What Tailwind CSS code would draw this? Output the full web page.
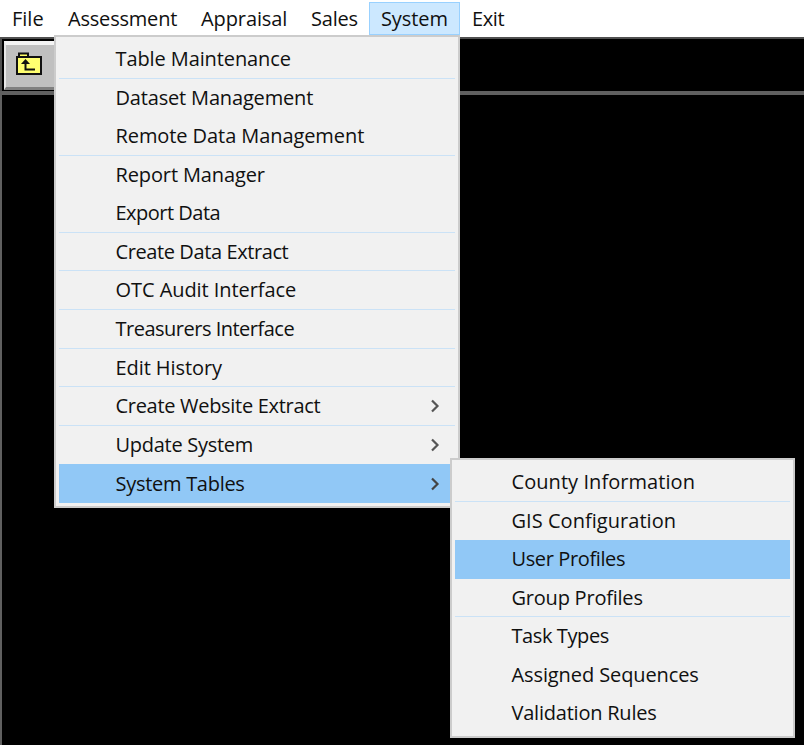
<!DOCTYPE html>
<html lang="en">
<head>
  <meta charset="UTF-8" />
  <meta name="viewport" content="width=device-width, initial-scale=1.0"/>
  <title>System Menu</title>
  <script src="https://cdn.jsdelivr.net/npm/@tailwindcss/browser@4"></script>
</head>
<body class="bg-black w-[804px] h-[745px] overflow-hidden relative font-['Open_Sans','Noto_Sans',sans-serif] text-[20px] text-[#101010]">
  <div class="flex flex-col h-full">
    <!-- Menu bar -->
    <nav class="flex items-start h-[37px] pt-[2px] bg-white shrink-0 leading-[34px] whitespace-nowrap">
      <span class="w-[57px] pl-[12px]">File</span>
      <span class="w-[133px] pl-[11px] tracking-[-0.2px]">Assessment</span>
      <span class="w-[110px] pl-[11px] tracking-[-0.1px]">Appraisal</span>
      <span class="w-[69px] pl-[11px] tracking-[-0.2px]">Sales</span>
      <span class="w-[91px] h-[33px] leading-[32px] pl-[11px] bg-[#cce8ff] border border-[#99d1ff] tracking-[-0.1px]">System</span>
      <span class="pl-[12px] tracking-[-0.4px]">Exit</span>
    </nav>

    <!-- Toolbar -->
    <div class="h-[54px] shrink-0 border-t-2 border-l-2 border-[#505050] pt-[2px] pl-[2px]">
      <button class="flex items-start w-[52px] h-[49px] pt-[7px] pl-[9px] bg-[#c0c0c0] border-t-4 border-l-2 border-b-3 border-r-2 border-t-[#f4f4f4] border-l-[#e8e8e8] border-b-[#808080] border-r-[#909090]">
        <svg class="shrink-0" width="28" height="24" viewBox="0 0 28 24">
          <path d="M4 5V1.500h9V5" fill="#ffff66" stroke="#111" stroke-width="2"/>
          <path d="M2 5h24v17H2z" fill="#ffff70" stroke="#111" stroke-width="2"/>
          <path d="M10.500 9v8.500H20" fill="none" stroke="#111" stroke-width="2"/>
          <path d="M10.500 7l4.500 5H6z" fill="#111"/>
        </svg>
      </button>
    </div>

    <!-- Work area -->
    <div class="grow border-t-4 border-l-2 border-[#606060]"></div>
  </div>

  <!-- System menu -->
  <div class="absolute left-[54px] top-[35px] w-[406px] h-[473px] bg-[#f1f1f1] border-2 border-[#cccccc] px-[3px] pt-[3px]">
    <ul class="grid grid-rows-12 h-[463px] leading-[38px] whitespace-nowrap">
      <li class="pl-[56.5px] border-b border-[#cbe2f6] tracking-[-0.1px]">Table Maintenance</li>
      <li class="pl-[56.5px] tracking-[-0.17px]">Dataset Management</li>
      <li class="pl-[56.5px] border-b border-[#cbe2f6] tracking-[-0.08px]">Remote Data Management</li>
      <li class="pl-[56.5px] tracking-[-0.12px]">Report Manager</li>
      <li class="pl-[56.5px] border-b border-[#cbe2f6] tracking-[-0.5px]">Export Data</li>
      <li class="pl-[56.5px] border-b border-[#cbe2f6] tracking-[-0.4px]">Create Data Extract</li>
      <li class="pl-[56.5px] border-b border-[#cbe2f6] tracking-[-0.06px]">OTC Audit Interface</li>
      <li class="pl-[56.5px] border-b border-[#cbe2f6] tracking-[-0.5px]">Treasurers Interface</li>
      <li class="pl-[56.5px] border-b border-[#cbe2f6] tracking-[-0.08px]">Edit History</li>
      <li class="pl-[56.5px] pr-[15px] border-b border-[#cbe2f6] flex justify-between items-center">
        <span class="tracking-[-0.3px]">Create Website Extract</span>
        <svg width="10" height="14" viewBox="0 0 10 14" fill="none" stroke="#555" stroke-width="2.200"><path d="M2 1.500l5.500 5.500L2 12.500"/></svg>
      </li>
      <li class="pl-[56.5px] pr-[15px] flex justify-between items-center">
        <span class="tracking-[-0.28px]">Update System</span>
        <svg width="10" height="14" viewBox="0 0 10 14" fill="none" stroke="#555" stroke-width="2.200"><path d="M2 1.500l5.500 5.500L2 12.500"/></svg>
      </li>
      <li class="pl-[56.5px] pr-[15px] bg-[#91c8f6] flex justify-between items-center">
        <span class="tracking-[-0.28px]">System Tables</span>
        <svg width="10" height="14" viewBox="0 0 10 14" fill="none" stroke="#444" stroke-width="2.200"><path d="M2 1.500l5.500 5.500L2 12.500"/></svg>
      </li>
    </ul>
  </div>

  <!-- System Tables submenu -->
  <div class="absolute left-[450px] top-[458px] w-[345px] h-[280px] bg-[#f1f1f1] border-2 border-[#cccccc] px-[3px] pt-[3px]">
    <ul class="grid grid-rows-7 h-[270px] leading-[38px] whitespace-nowrap">
      <li class="pl-[56.5px] border-b border-[#cbe2f6] tracking-[0.06px]">County Information</li>
      <li class="pl-[56.5px] tracking-[0.04px]">GIS Configuration</li>
      <li class="pl-[56.5px] bg-[#91c8f6] tracking-[-0.38px]">User Profiles</li>
      <li class="pl-[56.5px] border-b border-[#cbe2f6] tracking-[-0.22px]">Group Profiles</li>
      <li class="pl-[56.5px] tracking-[-0.4px]">Task Types</li>
      <li class="pl-[56.5px] tracking-[-0.1px]">Assigned Sequences</li>
      <li class="pl-[56.5px] tracking-[-0.22px]">Validation Rules</li>
    </ul>
  </div>
</body>
</html>
